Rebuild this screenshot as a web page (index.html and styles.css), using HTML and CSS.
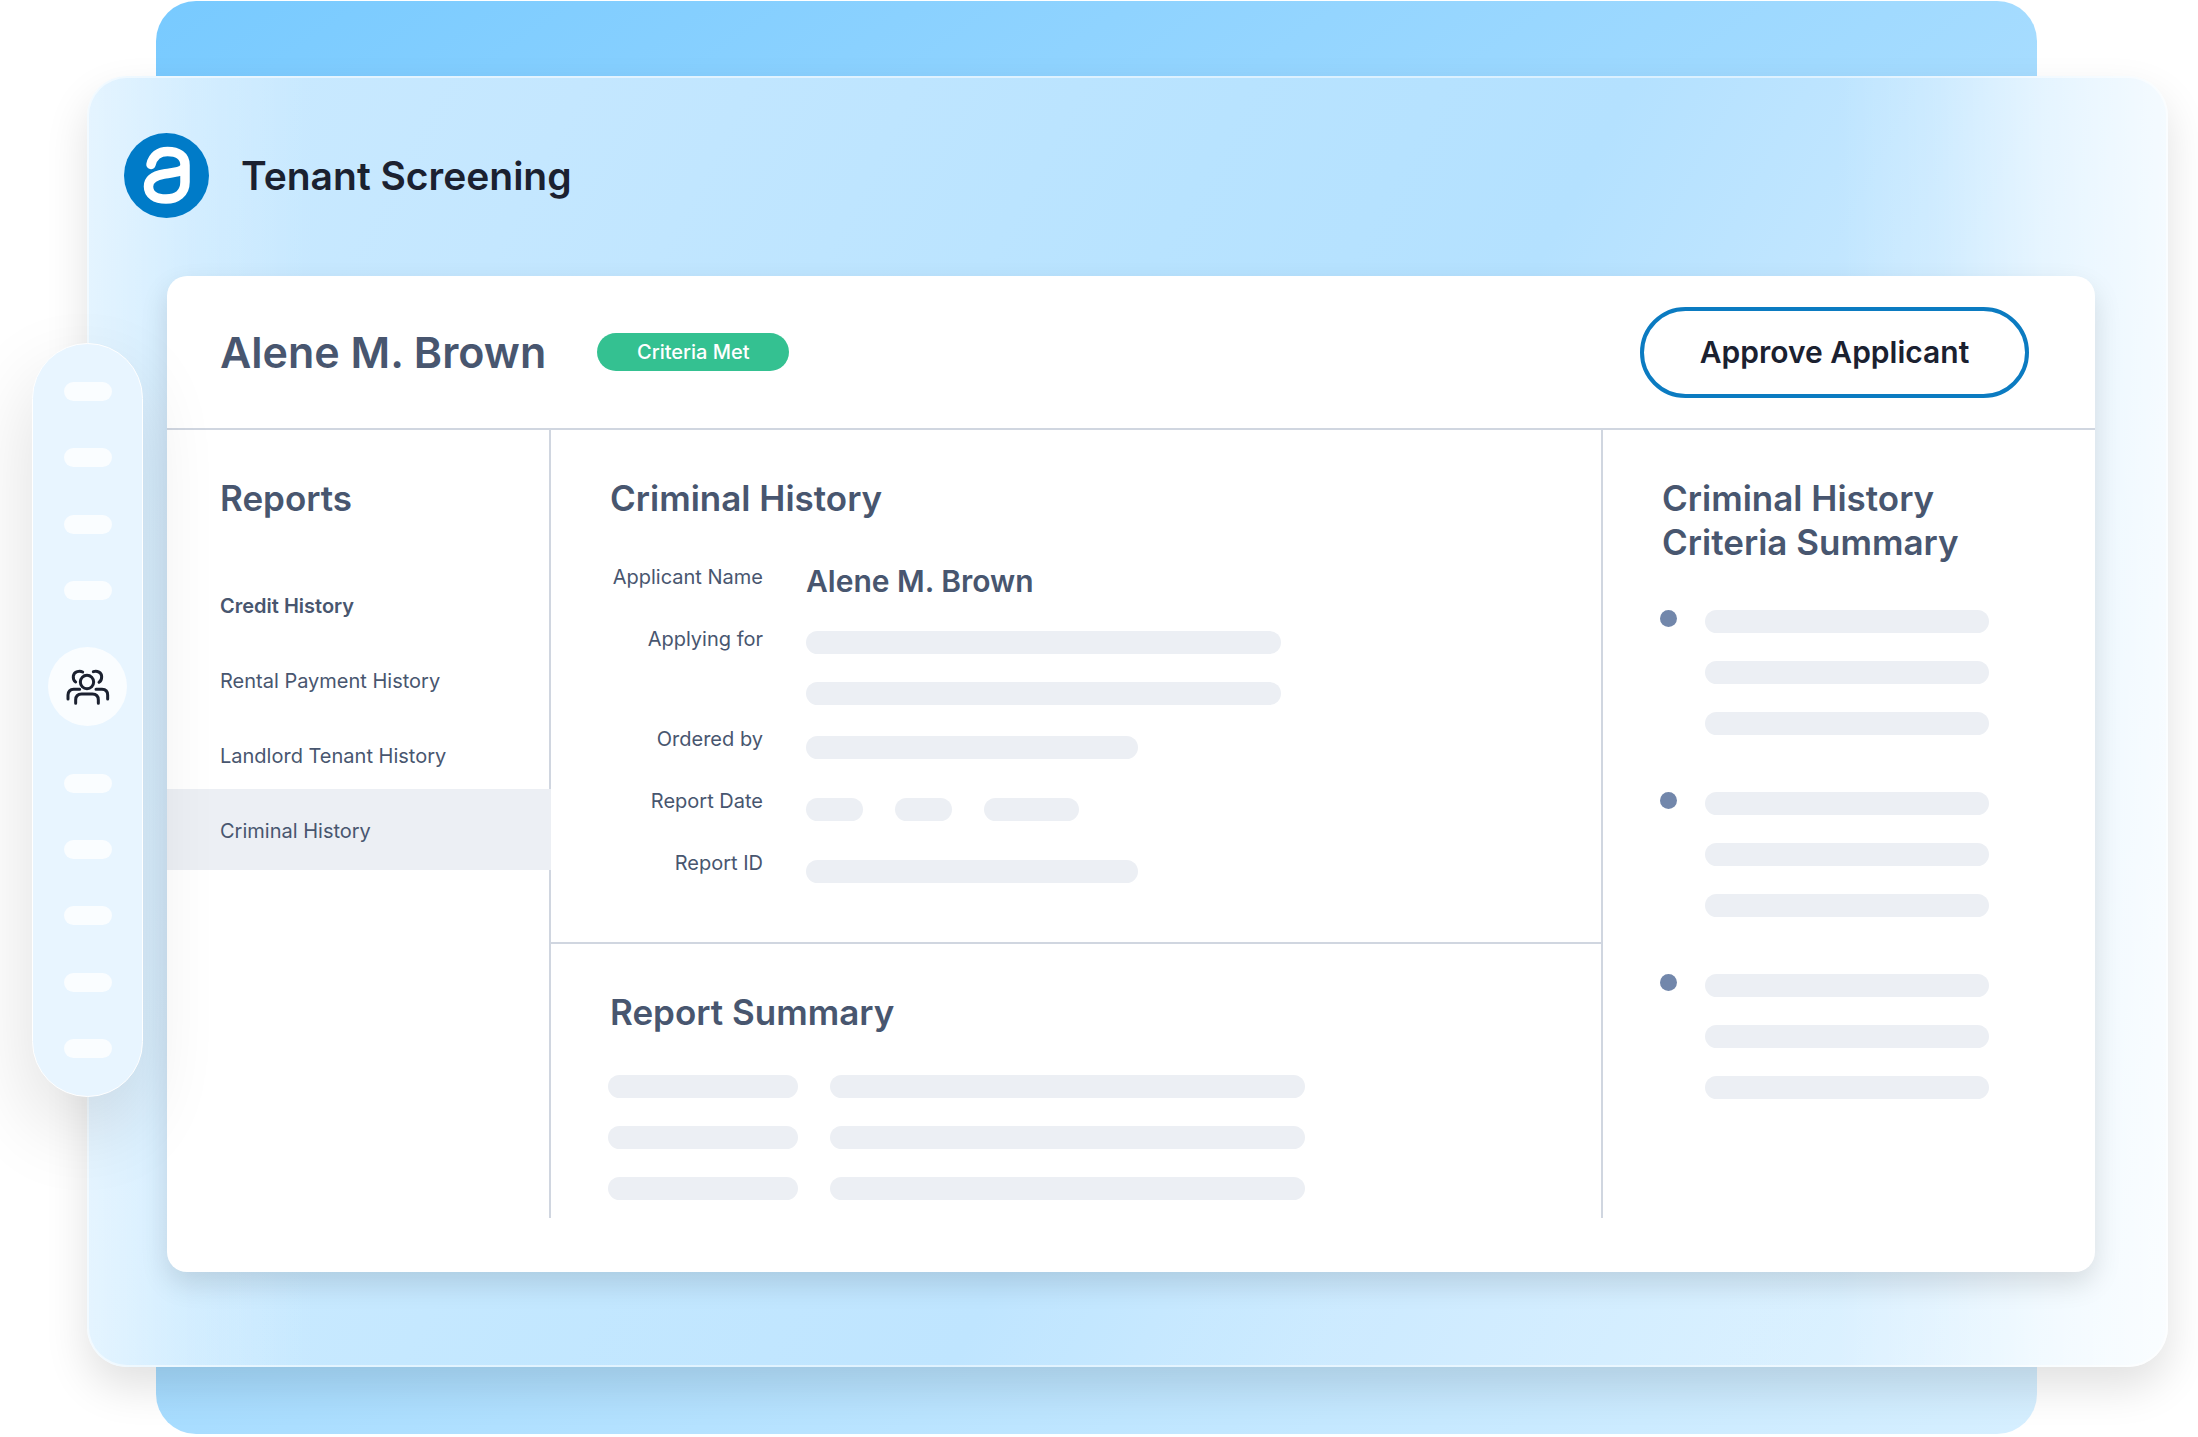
FILE: index.html
```
<!DOCTYPE html>
<html lang="en">
<head>
  <meta charset="utf-8">
  <title>Tenant Screening</title>
  <link rel="stylesheet" href="styles.css">
</head>
<body>
  <div class="backdrop">
    <div class="window">
      <header class="app-header">
        <svg class="logo" viewBox="0 0 85 85">
          <circle cx="42.5" cy="42.5" r="42.5" fill="#007bc8"/>
          <path d="M27 31.5C29 23 35 18.5 43.5 18.5C54 18.5 61 23 61 32V49C61 60 53 66 42 66C31 66 24.5 61 24.5 53.5C24.5 46 31 42.5 40 41C50 39.5 61 39 61 32" fill="none" stroke="#fff" stroke-width="9.5" stroke-linecap="round"/>
        </svg>
        <h1>Tenant Screening</h1>
      </header>

      <main class="card">
        <div class="card-header">
          <h2 class="applicant">Alene M. Brown</h2>
          <span class="badge">Criteria Met</span>
          <button class="approve" type="button">Approve Applicant</button>
        </div>

        <div class="columns">
          <nav class="reports">
            <h3>Reports</h3>
            <a class="report bold" href="#">Credit History</a>
            <a class="report" href="#">Rental Payment History</a>
            <a class="report" href="#">Landlord Tenant History</a>
            <a class="report active" href="#">Criminal History</a>
          </nav>

          <div class="details">
            <section class="history">
              <h3>Criminal History</h3>
              <dl class="fields">
                <div class="field">
                  <dt>Applicant Name</dt>
                  <dd class="name">Alene M. Brown</dd>
                </div>
                <div class="field tall">
                  <dt>Applying for</dt>
                  <dd class="lines"><span class="bar long"></span><span class="bar long"></span></dd>
                </div>
                <div class="field">
                  <dt>Ordered by</dt>
                  <dd class="value"><span class="bar medium"></span></dd>
                </div>
                <div class="field">
                  <dt>Report Date</dt>
                  <dd class="value"><span class="bar day"></span><span class="bar day"></span><span class="bar year"></span></dd>
                </div>
                <div class="field">
                  <dt>Report ID</dt>
                  <dd class="value"><span class="bar medium"></span></dd>
                </div>
              </dl>
            </section>

            <section class="summary">
              <h3>Report Summary</h3>
              <div class="lines">
                <div class="pair"><span class="bar short"></span><span class="bar long"></span></div>
                <div class="pair"><span class="bar short"></span><span class="bar long"></span></div>
                <div class="pair"><span class="bar short"></span><span class="bar long"></span></div>
              </div>
            </section>
          </div>

          <aside class="criteria">
            <h3>Criminal History<br>Criteria Summary</h3>
            <ul>
              <li><span class="lines"><span class="bar"></span><span class="bar"></span><span class="bar"></span></span></li>
              <li><span class="lines"><span class="bar"></span><span class="bar"></span><span class="bar"></span></span></li>
              <li><span class="lines"><span class="bar"></span><span class="bar"></span><span class="bar"></span></span></li>
            </ul>
          </aside>
        </div>
      </main>

      <!-- floating icon rail -->
      <div class="rail">
        <span class="pill"></span>
        <span class="pill"></span>
        <span class="pill"></span>
        <span class="pill"></span>
        <span class="rail-current">
          <svg viewBox="104 142 138 114" width="46" height="38" fill="none" stroke="#1b2130" stroke-width="9" stroke-linecap="round">
            <circle cx="170" cy="184" r="20"/>
            <path d="M136 248V238Q136 220 154 220H186Q204 220 204 238V248"/>
            <path d="M157 154C149 150 131 151 129 166C128 175 131 181 136 184"/>
            <path d="M189 153C201 149 214 156 214 168C214 177 211 182 206 185"/>
            <path d="M113 235V223Q114 207 130 206H148"/>
            <path d="M197 206H215Q232 207 232 223V235"/>
          </svg>
        </span>
        <span class="pill"></span>
        <span class="pill"></span>
        <span class="pill"></span>
        <span class="pill"></span>
        <span class="pill"></span>
      </div>
    </div>
  </div>
</body>
</html>
```
FILE: styles.css
```
* { box-sizing: border-box; }
body { margin: 0; padding: 1px 161px 2px 156px; background: #fff; color: #48566f; font-family: Inter, "Liberation Sans", sans-serif; }
h1, h2, h3, dl, dd, ul { margin: 0; padding: 0; font-weight: 600; }

.backdrop { padding: 75px 0 67px; border-radius: 40px; background: linear-gradient(145deg, #78caff 0%, #a6dcff 50%, #d6efff 100%); }

/* frosted panel: white fades at both sides over the blue */
.window {
  position: relative;
  margin: 0 -131px 0 -69px;
  padding: 55px 0 93px;
  border: 2px solid rgba(255, 255, 255, 0.5);
  border-radius: 40px;
  background:
    linear-gradient(90deg, rgba(255, 255, 255, 0.5) 0%, rgba(255, 255, 255, 0.2) 5%, rgba(255, 255, 255, 0) 11%, rgba(255, 255, 255, 0) 84%, rgba(255, 255, 255, 0.2) 89%, rgba(255, 255, 255, 0.55) 94%, rgba(255, 255, 255, 0.8) 100%) border-box,
    linear-gradient(180deg, rgba(255, 255, 255, 0) 20%, rgba(255, 255, 255, 0.15) 90%) border-box,
    linear-gradient(118deg, #cbeaff 0%, #c4e7ff 18%, #b8e3ff 42%, #b4e1ff 56%, #c4e7ff 69%, #d2edff 85%, #e2f4ff 100%) border-box;
  box-shadow: 0 20px 44px rgba(0, 0, 0, 0.12);
}

.app-header { display: flex; align-items: center; gap: 32px; margin-bottom: 58px; padding-left: 35px; }
.logo { width: 85px; height: 85px; }
h1 { color: #1b2130; font-size: 39px; line-height: 48px; }

/* main card */
.card { margin: 0 71px 0 78px; padding-bottom: 54px; border-radius: 20px; background: #fff; box-shadow: 0 12px 28px rgba(0, 0, 0, 0.12); }
.card-header { display: flex; align-items: center; height: 154px; padding: 0 66px 0 53px; border-bottom: 2px solid #d0d6e0; }
.applicant { font-size: 43px; line-height: 48px; }
.badge { margin-left: 51px; width: 192px; border-radius: 19px; background: #34c191; color: #fff; font-size: 20px; font-weight: 500; line-height: 38px; text-align: center; }
.approve { width: 389px; height: 91px; margin-left: auto; border: 4px solid #0b7bc1; border-radius: 46px; background: #fff; color: #1b2130; font-family: inherit; font-size: 30px; font-weight: 600; }

.columns { display: grid; grid-template-columns: 384px 1fr 494px; }
h3 { padding-left: 2px; font-size: 35px; line-height: 44px; }

/* reports list */
.reports { padding-top: 46px; background: linear-gradient(#d0d6e0, #d0d6e0) right / 2px 100% no-repeat; }
.reports h3 { margin-bottom: 44px; padding-left: 53px; }
.report { display: block; padding: 30px 53px 21px; color: #48566f; font-size: 20px; line-height: 24px; text-decoration: none; }
.bold { font-weight: 600; }
.active { padding-bottom: 27px; background: #eceff4; }

/* placeholders */
.bar { display: block; height: 23px; border-radius: 12px; background: #eceff4; }
.lines { display: grid; gap: 28px; }
.long { width: 475px; }
.medium { width: 332px; }
.short { width: 190px; }
.day { width: 57px; }
.year { width: 95px; }
.pair { display: flex; gap: 32px; }

.history { padding: 46px 57px 29px; border-bottom: 2px solid #d0d6e0; }
.fields { margin-top: 45px; }
.field { display: flex; gap: 43px; min-height: 62px; }
.tall { min-height: 100px; }
dt { width: 155px; font-size: 20px; font-weight: 400; line-height: 24px; text-align: right; white-space: nowrap; }
.name { font-size: 30px; line-height: 32px; }
.field .lines { align-content: start; padding-top: 4px; }
.value { display: flex; gap: 32px; padding-top: 9px; }

.summary { padding: 46px 57px 18px; }
.summary h3 { margin-bottom: 41px; }

.criteria { padding: 46px 57px 0; border-left: 2px solid #d0d6e0; }
.criteria ul { display: grid; gap: 57px; margin-top: 46px; list-style: none; }
.criteria li { display: flex; gap: 28px; }
.criteria li::before { content: ""; width: 17px; height: 17px; border-radius: 50%; background: #7287ab; }
.criteria .bar { width: 284px; }

/* rail hangs over the left edge of the window */
.rail { position: absolute; top: 265px; left: -57px; display: flex; flex-direction: column; align-items: center; justify-content: space-between; width: 111px; height: 754px; padding: 38px 0; border: 1px solid #fff; border-radius: 56px; background: #e8f5ff; box-shadow: -4px 32px 80px rgba(0, 0, 0, 0.12); }
.pill { width: 48px; height: 19px; border-radius: 10px; background: #fafdff; }
.rail-current { display: flex; align-items: center; justify-content: center; width: 79px; height: 79px; border-radius: 50%; background: #fafdff; }
```
